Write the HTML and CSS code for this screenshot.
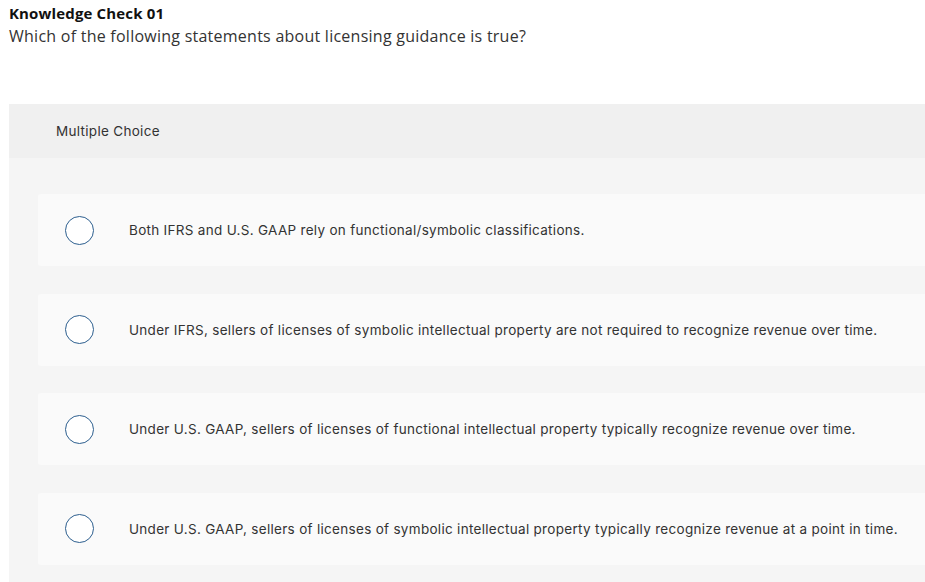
FILE: index.html
```html
<!DOCTYPE html>
<html lang="en">
  <head>
    <meta charset="UTF-8" />
    <meta name="viewport" content="width=device-width, initial-scale=1.0" />
    <title>Knowledge Check 01</title>
    <link rel="stylesheet" href="styles.css">
  </head>
  <body>
    <section class="check">
      <div class="check__head">
        <h1 class="check__title">Knowledge Check 01</h1>
        <p class="check__question">Which of the following statements about licensing guidance is true?</p>
      </div>

      <div class="quiz">
        <div class="quiz__type">Multiple Choice</div>
        <div class="quiz__options">
          <label class="option">
            <span class="option__radio"></span>
            <span class="option__text">Both IFRS and U.S. GAAP rely on functional/symbolic classifications.</span>
          </label>
          <label class="option">
            <span class="option__radio"></span>
            <span class="option__text">Under IFRS, sellers of licenses of symbolic intellectual property are not required to recognize revenue over time.</span>
          </label>
          <label class="option">
            <span class="option__radio"></span>
            <span class="option__text">Under U.S. GAAP, sellers of licenses of functional intellectual property typically recognize revenue over time.</span>
          </label>
          <label class="option">
            <span class="option__radio"></span>
            <span class="option__text">Under U.S. GAAP, sellers of licenses of symbolic intellectual property typically recognize revenue at a point in time.</span>
          </label>
        </div>
      </div>
    </section>
  </body>
</html>
```

FILE: styles.css
```css
body {
  margin: 0;
  overflow: hidden;
  background-color: #fff;
  color: #222;
  font-family: "Open Sans", "Liberation Sans", sans-serif;
}

.check__head {
  padding: 3px 9px 0;
}

.check__title {
  margin: 0;
  font-size: 15px;
  font-weight: 700;
  line-height: 20px;
  letter-spacing: 0.15px;
  color: #111;
}

.check__question {
  margin: 2px 0 0;
  font-size: 16px;
  line-height: 22px;
  letter-spacing: 0.25px;
  color: #333;
}

.quiz {
  margin: 57px -30px 0 9px;
  background-color: #f5f5f5;
}

.quiz__type {
  height: 54px;
  padding-left: 47px;
  display: flex;
  align-items: center;
  background-color: #f0f0f0;
  font-family: Inter, "Open Sans", sans-serif;
  font-size: 13.5px;
  letter-spacing: 0.3px;
  color: #333;
}

.quiz__options {
  padding: 36px 0 30px 29px;
  display: flex;
  flex-direction: column;
  gap: 27.5px;
}

.option {
  height: 72px;
  display: flex;
  align-items: center;
  background-color: #fafafa;
  border-radius: 3px;
  cursor: pointer;
}

.option__radio {
  width: 27px;
  height: 27px;
  margin-left: 27px;
  margin-right: 35px;
  border: 1.5px solid #2c5e8e;
  border-radius: 50%;
  background-color: #fff;
  flex-shrink: 0;
}

.option__text {
  font-family: Inter, "Open Sans", sans-serif;
  font-size: 13.5px;
  letter-spacing: 0.3px;
  color: #333;
}
```
